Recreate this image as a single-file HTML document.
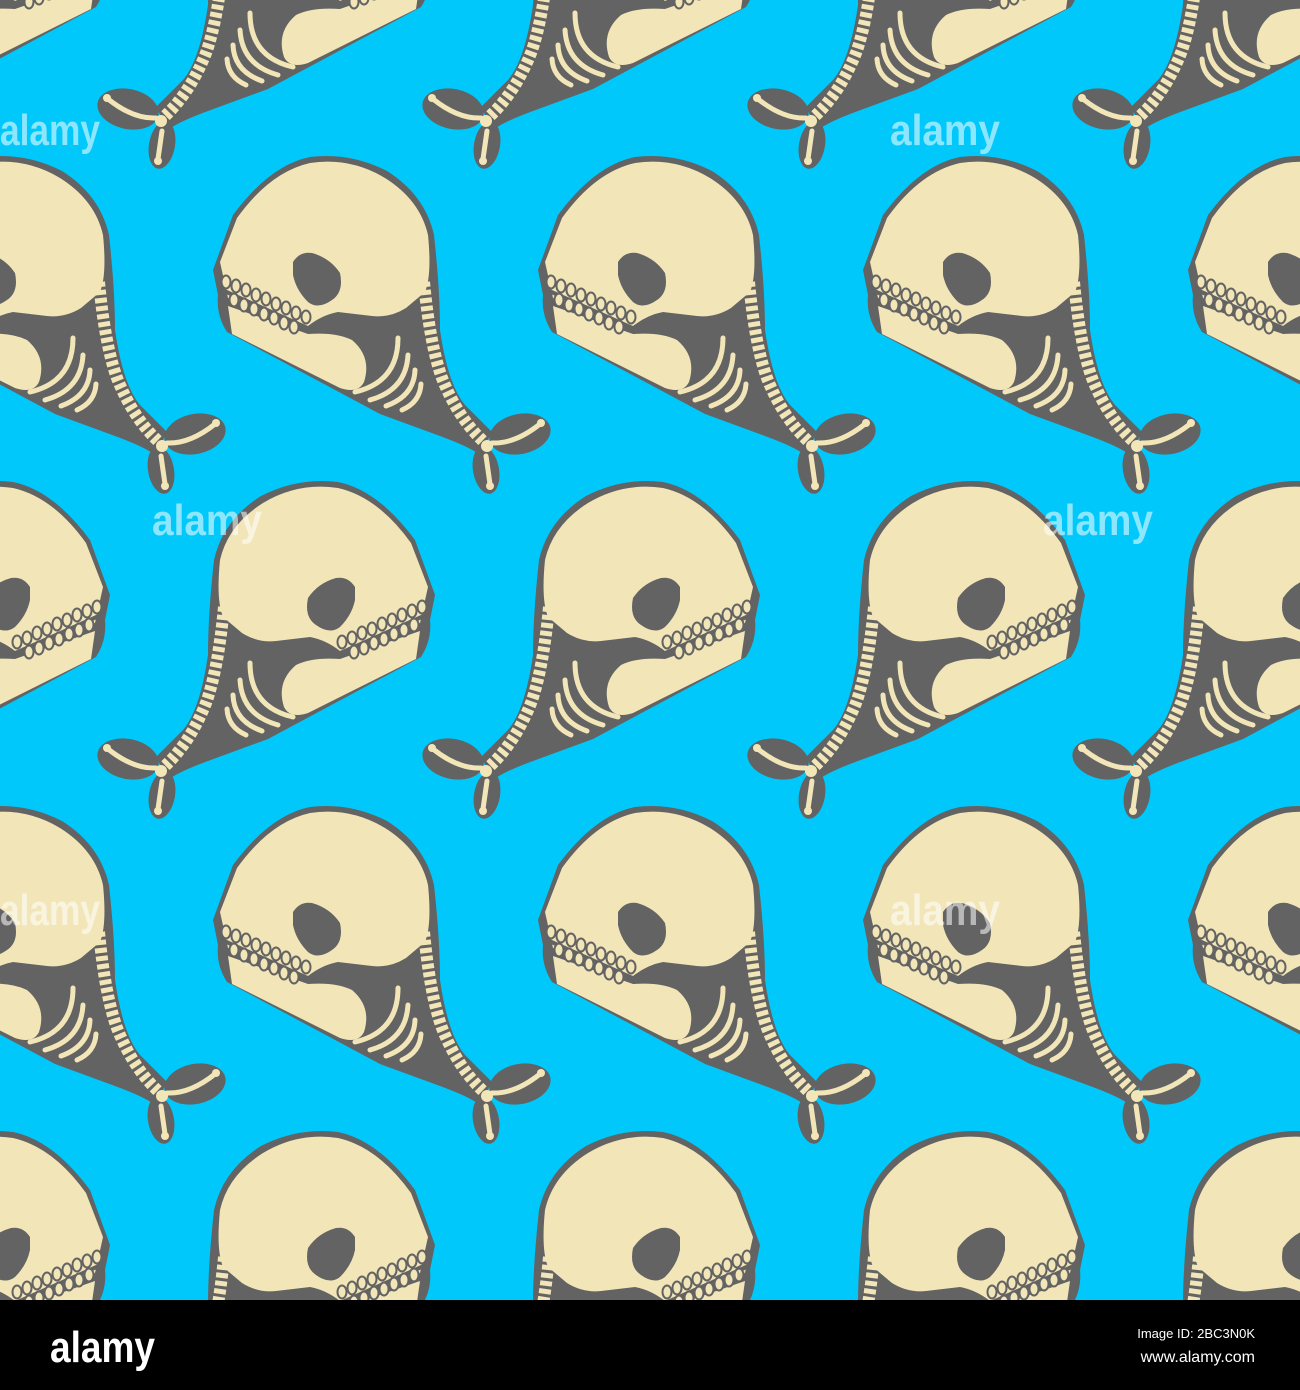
<!DOCTYPE html>
<html><head><meta charset="utf-8"><style>
html,body{margin:0;padding:0;width:1300px;height:1390px;overflow:hidden;background:#000}
svg{display:block;overflow:hidden}
</style></head><body>
<svg width="1300" height="1390" viewBox="0 0 1300 1390" xmlns="http://www.w3.org/2000/svg">
<defs>
<ellipse id="t" rx="4.5" ry="6.5" fill="#f2e6b8" stroke="#636363" stroke-width="2"/>
<g id="w">
  <!-- tail lobes -->
  <ellipse cx="520" cy="434" rx="31" ry="20" transform="rotate(-12 520 434)" fill="#636363"/>
  <ellipse cx="486" cy="470" rx="13" ry="24" transform="rotate(-10 486 470)" fill="#636363"/>
  <!-- body silhouette -->
  <path d="M213 270 L233 215 Q270 165 310 157 Q350 152 387 171 Q425 195 434 235 Q440 290 440 330 Q448 385 465 405 L492 432 L480 455 Q470 447 440 436 L380 414 L227 332 Q216 315 218 295 Z" fill="#636363"/>
  <path d="M492 443 Q515 444 540 424" stroke="#f2e6b8" stroke-width="5" fill="none" stroke-linecap="round"/>
  <circle cx="541" cy="423" r="4" fill="#f2e6b8"/>
  <path d="M486 456 L490 484" stroke="#f2e6b8" stroke-width="5" stroke-linecap="round"/>
  <circle cx="490" cy="486" r="4" fill="#f2e6b8"/>
  <circle cx="487" cy="446" r="6" fill="#f2e6b8"/>
  <!-- skull -->
  <path d="M220 262 L237 218 Q270 172 310 163 Q350 157 385 178 Q420 200 428 235 Q432 275 425 292 L406 308 Q390 318 372 316 L338 312 Q322 315 308 326 L228 298 Z" fill="#f2e6b8"/>
  <!-- jaw -->
  <path d="M228 306 L308 334 Q336 332 352 340 Q372 357 364 382 Q358 394 340 388 L232 334 Z" fill="#f2e6b8"/>
  <!-- eye -->
  <path d="M293 262 Q300 251 312 253 Q330 258 340 273 Q344 292 332 300 Q318 310 308 302 Q296 290 293 275 Z" fill="#636363"/>
  <!-- teeth -->
  <path d="M222 290 L312 330" stroke="#636363" stroke-width="4"/>
  <use href="#t" x="226" y="282"/><use href="#t" x="236" y="286"/><use href="#t" x="246" y="290"/>
  <use href="#t" x="256" y="295"/><use href="#t" x="266" y="299"/><use href="#t" x="276" y="304"/>
  <use href="#t" x="286" y="308"/><use href="#t" x="296" y="313"/><use href="#t" x="306" y="317"/>
  <use href="#t" x="234" y="300"/><use href="#t" x="244" y="305"/><use href="#t" x="254" y="309"/>
  <use href="#t" x="264" y="314"/><use href="#t" x="274" y="318"/><use href="#t" x="284" y="323"/>
  <use href="#t" x="294" y="327"/>
  <!-- spine -->
  <path d="M424 282 Q430 345 442 378 Q458 418 484 442" stroke="#f2e6b8" stroke-width="12" fill="none" stroke-dasharray="5 3"/>
  <!-- ribs -->
  <path d="M398 338 Q398 382 355 392" stroke="#f2e6b8" stroke-width="5" fill="none" stroke-linecap="round"/>
  <path d="M408 355 Q406 390 370 400" stroke="#f2e6b8" stroke-width="5" fill="none" stroke-linecap="round"/>
  <path d="M415 370 Q414 396 386 406" stroke="#f2e6b8" stroke-width="5" fill="none" stroke-linecap="round"/>
  <path d="M421 384 Q420 402 402 410" stroke="#f2e6b8" stroke-width="5" fill="none" stroke-linecap="round"/>
</g>
<g id="a">
  <use href="#w" x="-650"/><use href="#w" x="-325"/><use href="#w"/><use href="#w" x="325"/><use href="#w" x="650"/><use href="#w" x="975"/>
</g>
<g id="b">
  <use href="#w" transform="translate(-327 0) scale(-1 1)"/>
  <use href="#w" transform="translate(-2 0) scale(-1 1)"/>
  <use href="#w" transform="translate(323 0) scale(-1 1)"/>
  <use href="#w" transform="translate(648 0) scale(-1 1)"/>
  <use href="#w" transform="translate(973 0) scale(-1 1)"/>
  <use href="#w" transform="translate(1298 0) scale(-1 1)"/>
  <use href="#w" transform="translate(1623 0) scale(-1 1)"/>
</g>
</defs>
<rect x="0" y="0" width="1300" height="1300" fill="#00c8fb"/>
<g>
  <use href="#b" y="-325"/>
  <use href="#a" y="-650"/>
  <use href="#a" y="0"/>
  <use href="#b" y="325"/>
  <use href="#a" y="650"/>
  <use href="#b" y="975"/>
</g>
<g font-family="Liberation Sans, sans-serif" font-weight="bold" fill="#ffffff" fill-opacity="0.55">
  <text x="0" y="145" font-size="44" textLength="100" lengthAdjust="spacingAndGlyphs">alamy</text>
  <text x="890" y="145" font-size="44" textLength="110" lengthAdjust="spacingAndGlyphs">alamy</text>
  <text x="152" y="535" font-size="44" textLength="110" lengthAdjust="spacingAndGlyphs">alamy</text>
  <text x="1043" y="535" font-size="44" textLength="110" lengthAdjust="spacingAndGlyphs">alamy</text>
  <text x="0" y="925" font-size="44" textLength="100" lengthAdjust="spacingAndGlyphs">alamy</text>
  <text x="890" y="925" font-size="44" textLength="110" lengthAdjust="spacingAndGlyphs">alamy</text>
</g>
<rect x="0" y="1300" width="1300" height="90" fill="#000"/>
<text x="50" y="1362" font-family="Liberation Sans, sans-serif" font-weight="bold" font-size="44" fill="#fff" textLength="105" lengthAdjust="spacingAndGlyphs">alamy</text>
<text x="1255" y="1338" text-anchor="end" font-family="Liberation Sans, sans-serif" font-size="13" fill="#fff">Image ID: 2BC3N0K</text>
<text x="1255" y="1362" text-anchor="end" font-family="Liberation Sans, sans-serif" font-size="16" fill="#fff">www.alamy.com</text>
</svg>
</body></html>
